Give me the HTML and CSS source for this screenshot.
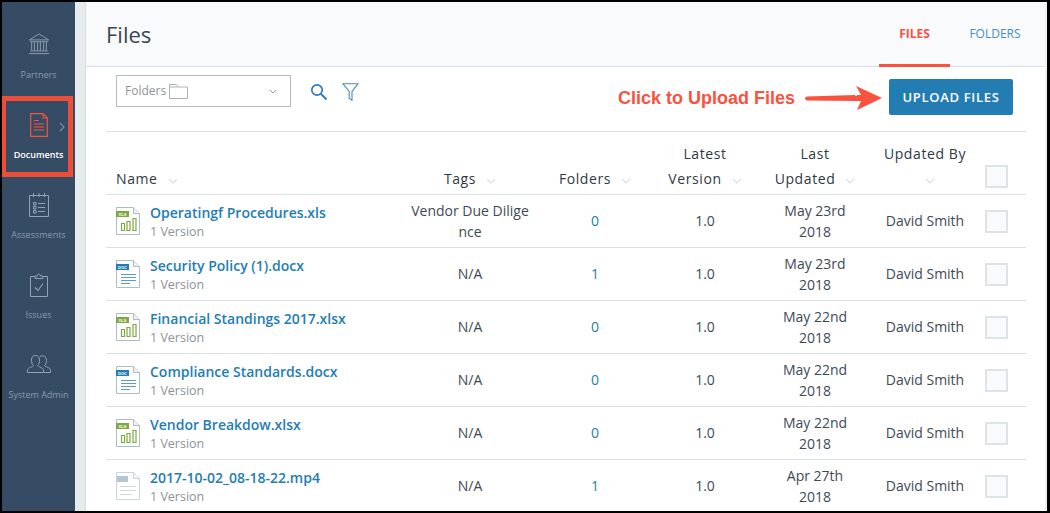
FILE: index.html
```html
<!DOCTYPE html>
<html lang="en">
<head>
<meta charset="utf-8">
<title>Files</title>
<link rel="stylesheet" href="styles.css">
</head>
<body>
<svg class="defs" width="0" height="0">
  <symbol id="chev" viewBox="0 0 10 6"><path d="M1 1l4 4 4-4" fill="none" stroke="currentColor" stroke-width="1.2"/></symbol>
  <symbol id="xls" viewBox="0 0 24 28">
    <path d="M.5.5H17.5L23.5 6.5V27.5H.5Z" fill="#fff" stroke="#a9bcc8"/><path d="M17.5.5V6.5H23.5" fill="#eef2f5" stroke="#a9bcc8"/>
    <rect y="4" width="13" height="6" fill="#7fa83f"/>
    <path d="M5.500 16.500h3v7h-3zM11 14.500h3v9h-3zM17 11.500h3v12h-3z" fill="none" stroke="#7fa83f" stroke-width="1.200"/>
  </symbol>
  <symbol id="doc" viewBox="0 0 24 28">
    <path d="M.5.5H17.5L23.5 6.500V27.500H.5Z" fill="#fff" stroke="#a9bcc8"/><path d="M17.5.5V6.500H23.500" fill="#eef2f5" stroke="#a9bcc8"/>
    <rect y="4" width="13" height="6" fill="#237db3"/>
    <path d="M5 14.500h15M5 17.500h15M5 20.500h15M5 23.500h9" fill="none" stroke="#5c9cc5"/>
  </symbol>
  <symbol id="vid" viewBox="0 0 24 28">
    <path d="M.5.5H17.5L23.5 6.500V27.500H.5Z" fill="#fff" stroke="#c9d4db"/><path d="M17.5.5V6.500H23.500" fill="#f2f5f7" stroke="#c9d4db"/>
    <rect x="1" y="4" width="11" height="6" fill="#b5c6d3"/>
    <path d="M4 14.500h16M4 18.500h16M4 22.500h12" fill="none" stroke="#cfd9df"/>
  </symbol>
</svg>

<div class="frame">
  <aside class="sidebar">
    <a class="nav-item item-partners">
      <svg class="nav-icon" width="22" height="22" viewBox="0 0 24 24" fill="none" stroke="currentColor"><path d="M12 1L1.500 7.500H22.500ZM2 9.500H22M4 10V19M7 10V19M10.500 10V19M13.500 10V19M17 10V19M20 10V19M2.500 19.500H21.500M1 22.500H23"/></svg>
      <span>Partners</span>
    </a>
    <a class="nav-item active">
      <svg class="nav-icon" width="18" height="24" viewBox="0 0 18 24" fill="none" stroke="currentColor"><path d="M.7.7H13L17.300 5V23.300H.7ZM13 .7V5H17.300" stroke-width="1.200"/><path d="M4 7.500H9M4 11H14M4 14H14M4 17H14" stroke-width="1.200"/></svg>
      <span>Documents</span>
      <svg class="nav-caret" width="6" height="10" viewBox="0 0 6 10" fill="none" stroke="currentColor"><path d="M1 1l4 4-4 4" stroke-width="1.200"/></svg>
    </a>
    <a class="nav-item">
      <svg class="nav-icon" width="20" height="24" viewBox="0 0 20 24" fill="none" stroke="currentColor"><path d="M.5 2.500H19.500V23.500H.5ZM4.500 0V4M10 0V4M15.500 0V4"/><path d="M4.500 9.500h2.500v2.500H4.500zM4.500 13.500h2.500v2.500H4.500zM4.500 17.500h2.500v2.500H4.500zM9 10.500h7M9 14.500h7M9 18.500h7"/></svg>
      <span>Assessments</span>
    </a>
    <a class="nav-item">
      <svg class="nav-icon" width="18" height="24" viewBox="0 0 18 24" fill="none" stroke="currentColor"><path d="M5 3.500H.5V23.500H17.500V3.500H13M5 5.500H13V3H10.500C10.500 .5 7.500 .5 7.500 3H5Z"/><path d="M5 14.500l3 3 5-7" stroke-width="1.100"/></svg>
      <span>Issues</span>
    </a>
    <a class="nav-item item-admin">
      <svg class="nav-icon" width="24" height="18" viewBox="0 0 24 18" fill="none" stroke="currentColor"><path d="M.5 17.500V15C.5 12.500 6 12 6.500 10.500 5 9.500 4.500 7 4.500 5 4.500 2 6 .5 8.500 .5S12.500 2 12.500 5C12.500 7 12 9.500 10.500 10.500 11 12 16.500 12.500 16.500 15V17.500Z"/><path d="M13 1.500C13.800 1 14.500 .8 15.500 .8 18 .8 19.500 2.500 19.500 5.200 19.500 7.200 19 9.500 17.500 10.500 18 12 23.500 12.500 23.500 15V17.500H17"/></svg>
      <span>System Admin</span>
    </a>
  </aside>
  <div class="gutter"></div>
  <main class="main">
    <header class="page-head">
      <h1>Files</h1>
      <nav class="tabs">
        <a class="tab tab-active">FILES</a>
        <a class="tab">FOLDERS</a>
      </nav>
    </header>
    <div class="content">
      <div class="toolbar">
        <div class="select">
          <span class="select-label">Folders</span>
          <svg class="folder" width="19" height="15" viewBox="0 0 19 15" fill="none" stroke="#aeb2b5"><path d="M.5 14.500V.5H7.500L9.500 3H18.500V14.500ZM.5 3H9.500"/></svg>
          <svg class="select-chev"><use href="#chev"/></svg>
        </div>
        <svg class="tool" width="18" height="18" viewBox="0 0 18 18" fill="none" stroke="#2f7db5"><circle cx="7" cy="7" r="5.200" stroke-width="1.700"/><path d="M11 11l5.500 5.500" stroke-width="2"/></svg>
        <svg class="tool" width="17" height="18" viewBox="0 0 17 18" fill="none" stroke="#4a8cbd"><path d="M.8.7H16.200L10 8.500V17.200L7.200 15.500V8.500Z" stroke-width="1.100"/></svg>
        <button class="upload">UPLOAD FILES</button>
      </div>
      <table class="files">
        <colgroup>
          <col class="c-name"><col class="c-tags"><col class="c-std"><col class="c-std"><col class="c-std"><col class="c-std"><col class="c-check">
        </colgroup>
        <thead>
          <tr>
            <th class="left">Name<svg class="sort"><use href="#chev"/></svg></th>
            <th>Tags<svg class="sort"><use href="#chev"/></svg></th>
            <th>Folders<svg class="sort"><use href="#chev"/></svg></th>
            <th>Latest Version<svg class="sort"><use href="#chev"/></svg></th>
            <th>Last Updated<svg class="sort"><use href="#chev"/></svg></th>
            <th>Updated By<svg class="sort"><use href="#chev"/></svg></th>
            <th class="check"><span class="box"></span></th>
          </tr>
        </thead>
        <tbody>
          <tr>
            <td class="left"><div class="file"><svg class="ficon" viewBox="0 0 24 28"><use href="#xls"/><text x="6.500" y="9" class="ftag">XLS</text></svg><div><a class="fname">Operatingf Procedures.xls</a><div class="fver">1 Version</div></div></div></td>
            <td class="tagcell">Vendor Due Diligence</td><td class="num">0</td><td>1.0</td><td>May 23rd 2018</td><td>David Smith</td><td class="check"><span class="box"></span></td>
          </tr>
          <tr>
            <td class="left"><div class="file"><svg class="ficon" viewBox="0 0 24 28"><use href="#doc"/><text x="6.500" y="9" class="ftag">DOC</text></svg><div><a class="fname">Security Policy (1).docx</a><div class="fver">1 Version</div></div></div></td>
            <td class="tagcell">N/A</td><td class="num">1</td><td>1.0</td><td>May 23rd 2018</td><td>David Smith</td><td class="check"><span class="box"></span></td>
          </tr>
          <tr>
            <td class="left"><div class="file"><svg class="ficon" viewBox="0 0 24 28"><use href="#xls"/><text x="6.500" y="9" class="ftag">XLS</text></svg><div><a class="fname">Financial Standings 2017.xlsx</a><div class="fver">1 Version</div></div></div></td>
            <td class="tagcell">N/A</td><td class="num">0</td><td>1.0</td><td>May 22nd 2018</td><td>David Smith</td><td class="check"><span class="box"></span></td>
          </tr>
          <tr>
            <td class="left"><div class="file"><svg class="ficon" viewBox="0 0 24 28"><use href="#doc"/><text x="6.500" y="9" class="ftag">DOC</text></svg><div><a class="fname">Compliance Standards.docx</a><div class="fver">1 Version</div></div></div></td>
            <td class="tagcell">N/A</td><td class="num">0</td><td>1.0</td><td>May 22nd 2018</td><td>David Smith</td><td class="check"><span class="box"></span></td>
          </tr>
          <tr>
            <td class="left"><div class="file"><svg class="ficon" viewBox="0 0 24 28"><use href="#xls"/><text x="6.500" y="9" class="ftag">XLS</text></svg><div><a class="fname">Vendor Breakdow.xlsx</a><div class="fver">1 Version</div></div></div></td>
            <td class="tagcell">N/A</td><td class="num">0</td><td>1.0</td><td>May 22nd 2018</td><td>David Smith</td><td class="check"><span class="box"></span></td>
          </tr>
          <tr>
            <td class="left"><div class="file"><svg class="ficon" viewBox="0 0 24 28"><use href="#vid"/></svg><div><a class="fname">2017-10-02_08-18-22.mp4</a><div class="fver">1 Version</div></div></div></td>
            <td class="tagcell">N/A</td><td class="num">1</td><td>1.0</td><td>Apr 27th 2018</td><td>David Smith</td><td class="check"><span class="box"></span></td>
          </tr>
        </tbody>
      </table>
    </div>
  </main>
  <div class="highlight"></div>
  <div class="callout">
    <span>Click to Upload Files</span>
    <svg width="78" height="26" viewBox="0 0 78 26"><path d="M2 11.500L50 10V11L51 10.500 52 11V10H56L51 1 77 13 52 25 56 16H52L2 15.500C-.5 15.500 -.5 11.500 2 11.500Z" fill="#f9523f"/></svg>
  </div>
</div>
</body>
</html>
```
FILE: styles.css
```css
* { box-sizing: border-box; }
html, body { margin: 0; height: 100%; }
body { font-family: "Open Sans", "Noto Sans", sans-serif; color: #3d4a55; background: #000; }
.defs { position: absolute; }
.ftag { font: 700 4px "Liberation Sans", sans-serif; fill: #fff; text-anchor: middle; }

.frame {
  position: relative;
  display: flex;
  width: 1050px;
  height: 513px;
  border: solid #000;
  border-width: 2px 3px 2px 2px;
  background: #fff;
  overflow: hidden;
}

.sidebar { flex: 0 0 73px; padding-top: 15px; background: #364c65; }
.nav-item {
  position: relative;
  display: flex;
  flex-direction: column;
  align-items: center;
  height: 80px;
  color: #8b9aab;
  font-size: 9px;
  line-height: 12px;
}
.nav-icon { position: absolute; left: 50%; bottom: 40px; transform: translateX(-50%); color: #94a2b1; }
.item-partners .nav-icon { bottom: 42px; }
.item-admin .nav-icon { bottom: 44px; }
.nav-item span { position: absolute; top: 52px; white-space: nowrap; }
.nav-item.active { color: #fff; font-weight: 600; }
.nav-item.active .nav-icon { color: #f5533d; }
.nav-caret { position: absolute; left: 57px; top: 25px; color: #7f8b99; }

.gutter { flex: 0 0 11px; background: #e6ebee; border-right: 1px solid #d5dde2; }

.main { flex: 1; min-width: 0; border-right: 2px solid #f0f1f2; }
.page-head {
  display: flex;
  justify-content: space-between;
  height: 65px;
  padding-left: 20px;
  background: #f9fafc;
  border-bottom: 1px solid #d8e0e5;
}
.page-head h1 { margin: 14px 0 0; font-size: 22px; font-weight: 400; line-height: 36px; color: #3a4651; }
.tabs { display: flex; margin-right: 5px; }
.tab {
  display: block;
  width: 90px;
  padding-top: 24px;
  text-align: center;
  font-size: 12px;
  line-height: 16px;
  color: #4a8cbd;
}
.tab-active { width: 71px; height: 65px; color: #f9523f; font-weight: 700; border-bottom: 3px solid #f9523f; }

.content { padding: 0 19px 0 20px; }
.toolbar {
  display: flex;
  align-items: flex-start;
  height: 65px;
  padding: 8px 13px 0 10px;
  border-bottom: 1px solid #d8e0e5;
}
.select {
  display: flex;
  align-items: center;
  width: 175px;
  height: 32px;
  padding: 0 13px 0 8px;
  border: 1px solid #b7bbbc;
  font-size: 12px;
  color: #8f9499;
}
.select-label { padding-bottom: 2px; }
.folder { margin-left: 3px; }
.select-chev { width: 8px; height: 5px; margin-left: auto; color: #8f9499; }
.tool { margin: 8px 0 0 19px; }
.tool + .tool { margin-left: 14px; }
.upload {
  margin: 4px 0 0 auto;
  width: 124px;
  height: 36px;
  padding: 0;
  border: 0;
  border-radius: 2px;
  background: #237db3;
  color: #fff;
  font: 600 13px "Open Sans", sans-serif;
  letter-spacing: .7px;
}

.files { width: 920px; table-layout: fixed; border-collapse: collapse; font-size: 14px; }
.c-name { width: 294px; }
.c-tags { width: 140px; }
.c-std { width: 110px; }
.c-check { width: 46px; }
.files th {
  height: 62px;
  padding: 9px 10px 3px;
  vertical-align: bottom;
  font-size: 14px;
  font-weight: 500;
  letter-spacing: .6px;
  line-height: 25px;
  color: #2d3945;
  border-bottom: 1px solid #d8e0e5;
}
.files td {
  height: 53px;
  padding: 0 10px 1px;
  text-align: center;
  line-height: 21px;
  border-bottom: 1px solid #d8e0e5;
}
.files .left { padding-left: 10px; text-align: left; }
.files .check { padding: 0 0 0 5px; text-align: left; }
.files th.check { padding-bottom: 6px; }
.files .tagcell { padding: 0 11px 1px; word-break: break-all; }
.num { color: #237db3; }
.sort { width: 10px; height: 6px; margin-left: 10px; color: #d8e0e5; }
.box { display: block; width: 23px; height: 23px; background: #f9fafc; border: 2px solid #dde4e8; }

.file { display: flex; align-items: center; gap: 10px; padding-top: 4px; }
.ficon { flex: none; width: 24px; height: 28px; position: relative; top: -2px; }
.fname { display: block; font-weight: 600; line-height: 18px; color: #237db3; white-space: nowrap; }
.fver { margin-top: 1px; font-size: 12.5px; line-height: 18px; color: #8d9296; }

.highlight {
  position: absolute;
  left: -1px;
  top: 94px;
  width: 72px;
  height: 81px;
  border: 5px solid #ee4e38;
}
.callout {
  position: absolute;
  left: 616px;
  top: 83px;
  display: flex;
  align-items: center;
  gap: 10px;
  font: 700 18px "Liberation Sans", sans-serif;
  color: #f9523f;
}
```
